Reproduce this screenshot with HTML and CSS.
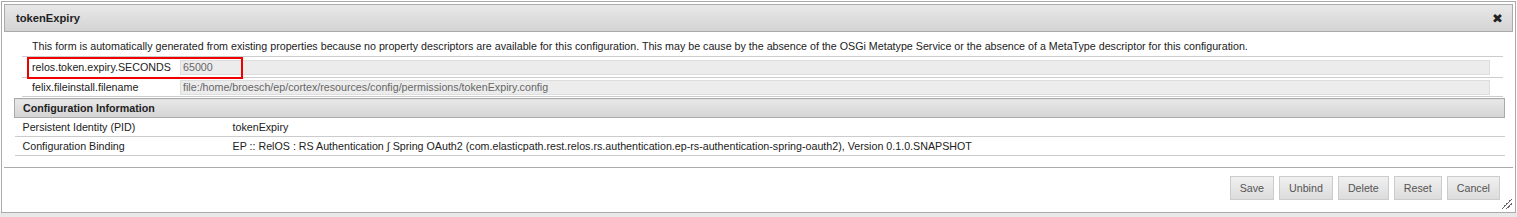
FILE: index.html
```html
<!DOCTYPE html>
<html lang="en">
<head>
    <meta charset="UTF-8">
    <title>tokenExpiry</title>
    <link rel="stylesheet" href="styles.css">
</head>
<body>
    <div class="dialog">
        <!-- Title bar -->
        <div class="titlebar">
            <span class="title">tokenExpiry</span>
            <span class="close">&#10006;</span>
        </div>

        <div class="content">
            <table class="props">
                <tr>
                    <td colspan="2" class="desc">This form is automatically generated from existing properties because no property descriptors are available for this configuration. This may be cause by the absence of the OSGi Metatype Service or the absence of a MetaType descriptor for this configuration.</td>
                </tr>
                <tr class="row1">
                    <td class="name">relos.token.expiry.SECONDS<span class="hilite"></span></td>
                    <td class="value"><input type="text" value="65000" readonly></td>
                </tr>
                <tr class="row2">
                    <td class="name">felix.fileinstall.filename</td>
                    <td class="value"><input type="text" value="file:/home/broesch/ep/cortex/resources/config/permissions/tokenExpiry.config" readonly></td>
                </tr>
            </table>

            <table class="info">
                <tr>
                    <th colspan="2">Configuration Information</th>
                </tr>
                <tr>
                    <td class="key">Persistent Identity (PID)</td>
                    <td>tokenExpiry</td>
                </tr>
                <tr>
                    <td class="key">Configuration Binding</td>
                    <td>EP :: RelOS : RS Authentication &#8747; Spring OAuth2 (com.elasticpath.rest.relos.rs.authentication.ep-rs-authentication-spring-oauth2), Version 0.1.0.SNAPSHOT</td>
                </tr>
            </table>
        </div>

        <!-- Buttons -->
        <div class="buttonpane">
            <button>Save</button>
            <button>Unbind</button>
            <button>Delete</button>
            <button>Reset</button>
            <button>Cancel</button>
            <span class="grip"></span>
        </div>
    </div>
</body>
</html>
```

FILE: styles.css
```css
body {
    font-family: "Liberation Sans", Arial, sans-serif;
    font-size: 10.7px;
    color: #222;
    margin: 0;
    padding: 1px 1px 0 1px;
    background: linear-gradient(#fff 212px, #e9e9e9 212px);
    height: 217px;
    box-sizing: border-box;
}
.dialog {
    border: 1px solid #aaa;
    padding: 2px;
    height: 206px;
    background: #fff;
    position: relative;
}
.titlebar {
    border: 1px solid #aaa;
    height: 26px;
    background: linear-gradient(#e8e8e8, #d4d4d4);
    display: flex;
    align-items: center;
    justify-content: space-between;
    padding: 0 9px 0 11px;
}
.title {
    font-weight: bold;
    font-size: 11.2px;
    color: #222;
}
.close {
    font-size: 13px;
    color: #222;
}
.content {
    padding: 4px 9px 0 10px;
    height: 131px;
}
table {
    border-collapse: collapse;
}
.props {
    margin-left: 8px;
    width: 1481px;
}
.props td {
    border-bottom: 1px solid #ccc;
    padding: 0;
}
.props .desc {
    padding-left: 10px;
    height: 20px;
}
.props .row1 td {
    height: 20px;
}
.props .row2 td {
    height: 18px;
}
.props .name {
    padding-left: 10px;
    width: 148px;
    position: relative;
}
.hilite {
    position: absolute;
    left: 5px;
    top: 0;
    width: 212px;
    height: 18px;
    border: 2px solid #e00;
}
.props input {
    width: 1310px;
    height: 15px;
    box-sizing: border-box;
    border: 1px solid #ddd;
    background: #ececec;
    color: #666;
    font-family: inherit;
    font-size: 10.7px;
    padding: 0 2px;
    vertical-align: middle;
}
.info {
    width: 1491px;
    margin-top: 1px;
}
.info th {
    text-align: left;
    font-weight: bold;
    font-size: 10.7px;
    border: 1px solid #aaa;
    background: linear-gradient(#e8e8e8, #d4d4d4);
    height: 18px;
    padding: 0 8px;
}
.info td {
    border-bottom: 1px solid #ccc;
    height: 18px;
    padding: 0 8px;
}
.info .key {
    width: 194px;
}
.buttonpane {
    border-top: 1px solid #aaa;
    display: flex;
    justify-content: flex-end;
    gap: 5px;
    padding: 8px 13px 0 0;
}
.buttonpane button {
    font-family: inherit;
    font-size: 10.7px;
    color: #555;
    height: 24px;
    padding: 0 9px;
    border: 1px solid #ccc;
    background: linear-gradient(#f0f0f0, #dcdcdc);
}
.grip {
    position: absolute;
    right: 3px;
    bottom: 3px;
    width: 10px;
    height: 10px;
    background: linear-gradient(135deg, transparent 45%, #666 45%, #666 52%, transparent 52%, transparent 68%, #666 68%, #666 75%, transparent 75%);
}
```
